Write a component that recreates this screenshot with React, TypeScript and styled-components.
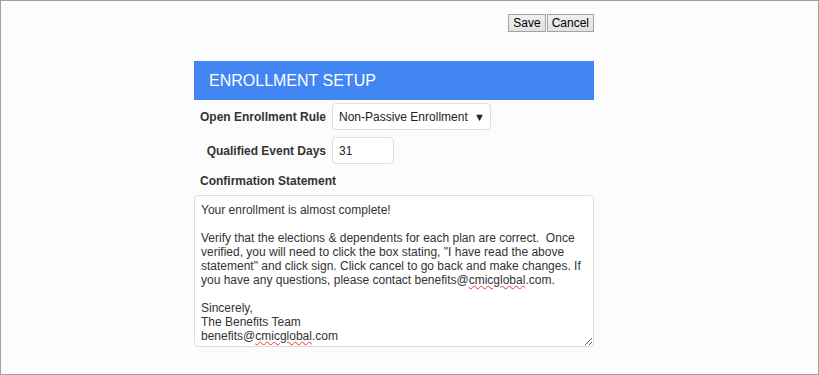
import React from "react";
import styled, { createGlobalStyle } from "styled-components";

const Global = createGlobalStyle`
  html, body { margin: 0; padding: 0; background: #fcfcfc; }
  body { font-family: "Liberation Sans", Arial, sans-serif; }
  * { box-sizing: border-box; }
`;

const Frame = styled.div`
  width: 819px;
  height: 375px;
  border: 1px solid #a0a0a0;
  background: #fcfcfc;
  padding: 13px 0 0 193px;
`;

const Column = styled.div`
  width: 400px;
  display: flex;
  flex-direction: column;
`;

const Toolbar = styled.div`
  display: flex;
  justify-content: flex-end;
  gap: 1px;
`;

const Button = styled.button`
  font-family: "Liberation Sans", Arial, sans-serif;
  font-size: 12px;
  color: #000;
  height: 18px;
  padding: 0 4px;
  background: linear-gradient(#f0f0f0, #e1e1e1);
  border: 1px solid #a3a3a3;
  border-radius: 0;
  line-height: 16px;
`;

const Header = styled.div`
  margin-top: 29px;
  height: 39px;
  background: #4286f4;
  color: #fff;
  font-size: 16px;
  display: flex;
  align-items: center;
  padding-left: 15px;
  padding-top: 1px;
`;

const Row = styled.div<{ $top: number }>`
  display: flex;
  align-items: center;
  margin-top: ${(p) => p.$top}px;
  gap: 6px;
`;

const Label = styled.div`
  width: 132px;
  text-align: right;
  font-size: 12px;
  font-weight: bold;
  color: #333;
`;

const Field = styled.div<{ $w: number }>`
  width: ${(p) => p.$w}px;
  height: 27px;
  border: 1px solid #ddd;
  border-radius: 4px;
  background: #fff;
  display: flex;
  align-items: center;
  justify-content: space-between;
  padding: 0 5px 0 6px;
  font-size: 12px;
  color: #222;
`;

const Arrow = styled.span`
  font-size: 11px;
  color: #222;
`;

const SectionLabel = styled.div`
  margin-top: 10px;
  padding-left: 6px;
  font-size: 12px;
  font-weight: bold;
  color: #333;
`;

const TextBox = styled.div`
  margin-top: 7px;
  width: 400px;
  height: 152px;
  border: 1px solid #ddd;
  border-radius: 4px;
  background: #fff;
  padding: 7px 6px;
  font-size: 12px;
  line-height: 14px;
  color: #333;
  white-space: pre-wrap;
  resize: both;
  overflow: hidden;
`;

const Squiggle = styled.span`
  text-decoration: underline wavy #e33;
  text-decoration-thickness: 1px;
  text-underline-offset: 1px;
`;

export default function App() {
  return (
    <>
      <Global />
      <Frame>
        <Column>
          <Toolbar>
            <Button>Save</Button>
            <Button>Cancel</Button>
          </Toolbar>
          <Header>ENROLLMENT SETUP</Header>
          <Row $top={3}>
            <Label>Open Enrollment Rule</Label>
            <Field $w={159}>
              <span>Non-Passive Enrollment</span>
              <Arrow>▼</Arrow>
            </Field>
          </Row>
          <Row $top={7}>
            <Label>Qualified Event Days</Label>
            <Field $w={62}>
              <span>31</span>
            </Field>
          </Row>
          <SectionLabel>Confirmation Statement</SectionLabel>
          <TextBox>
            {"Your enrollment is almost complete!\n\nVerify that the elections & dependents for each plan are correct.  Once verified, you will need to click the box stating, \"I have read the above statement\" and click sign. Click cancel to go back and make changes. If you have any questions, please contact benefits@"}
            <Squiggle>cmicglobal</Squiggle>
            {".com.\n\nSincerely,\nThe Benefits Team\nbenefits@"}
            <Squiggle>cmicglobal</Squiggle>
            {".com"}
          </TextBox>
        </Column>
      </Frame>
    </>
  );
}
